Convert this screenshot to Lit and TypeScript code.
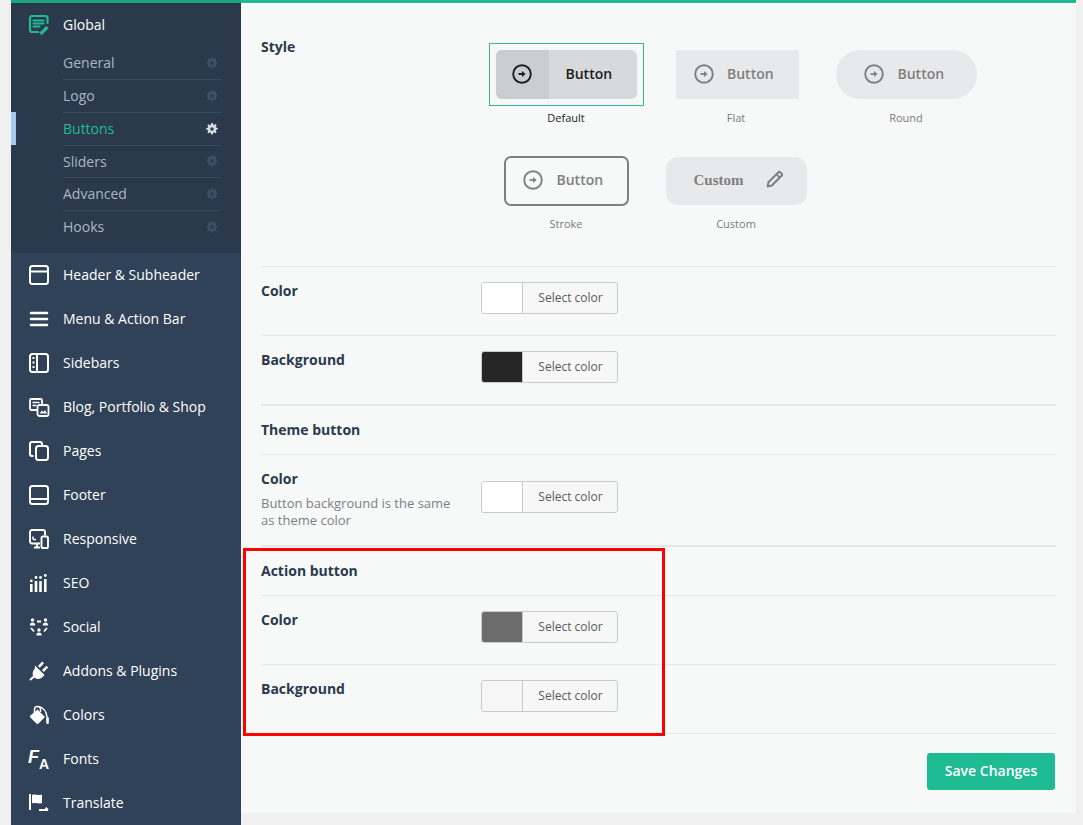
import { LitElement, html, css, svg } from "lit";
import { customElement } from "lit/decorators.js";

const icons: Record<string, unknown> = {
  global: svg`<g fill="none" stroke="#1fbc94" stroke-width="2.200" stroke-linecap="round"><path d="M18.500 8V3a2 2 0 0 0-2-2H3a2 2 0 0 0-2 2v12a2 2 0 0 0 2 2h6"/><path d="M4.500 5.500h10M4.500 8.500h10M4.500 11.500h6"/><path d="M11.500 19l7-7" stroke-width="3.400" stroke-linecap="butt"/></g>`,
  header: svg`<rect x="1" y="1" width="18" height="18" rx="2.500"/><path d="M1 6.500h18"/>`,
  menu: svg`<path d="M2 4h16M2 10h16M2 16h16" stroke-width="2.600" stroke-linecap="round"/>`,
  sidebars: svg`<rect x="1" y="1" width="18" height="18" rx="2.500"/><path d="M8 1v18"/><path d="M3.500 5h2M3.500 9.500h2M3.500 14h2" stroke-width="1.800"/>`,
  blog: svg`<path d="M8 13H2.500A1.500 1.500 0 0 1 1 11.500v-8A1.500 1.500 0 0 1 2.500 2h9A1.500 1.500 0 0 1 13 3.500V7" stroke-width="1.800"/><path d="M3.500 5.500h7M3.500 8.500h4" stroke-width="1.600"/><rect x="8.500" y="8" width="11" height="11" rx="2" stroke-width="1.800"/><path d="M10.500 16.500l2.500-3 1.500 1.500 1.500-2 2 3.500z" fill="#fff" stroke="none"/>`,
  pages: svg`<path d="M4.500 15H3a2 2 0 0 1-2-2V3a2 2 0 0 1 2-2h8a2 2 0 0 1 2 2v1"/><rect x="7" y="5" width="12" height="14" rx="2.500"/>`,
  footer: svg`<rect x="1" y="1" width="18" height="18" rx="2.500"/><path d="M1 14h18"/>`,
  responsive: svg`<path d="M11 14.500H3a2 2 0 0 1-2-2V3a2 2 0 0 1 2-2h11a2 2 0 0 1 2 2v3.500" stroke-width="1.900"/><path d="M4 10.500v-3M4 10.500h3" stroke-width="1.500"/><rect x="12.500" y="7.500" width="6.500" height="11.500" rx="1.600" stroke-width="1.900"/><path d="M5 18.500h6M8 14.500v4" stroke-width="1.900"/>`,
  seo: svg`<g fill="#fff" stroke="none"><rect x="1" y="11" width="2.600" height="8" rx=".6"/><rect x="5.700" y="8" width="2.600" height="11" rx=".6"/><rect x="10.200" y="8" width="2.600" height="11" rx=".6"/><rect x="15" y="6" width="2.600" height="13" rx=".6"/><circle cx="2.300" cy="7.800" r="1.400"/><circle cx="7" cy="4.500" r="1.400"/><circle cx="11.500" cy="4.500" r="1.400"/><circle cx="16.300" cy="2.500" r="1.400"/></g>`,
  social: svg`<g fill="#fff" stroke="none"><circle cx="3.500" cy="3" r="1.700"/><path d="M.800 8.500c0-2 1-3 2.700-3s2.700 1 2.700 3z"/><circle cx="16.500" cy="3" r="1.700"/><path d="M13.800 8.500c0-2 1-3 2.700-3s2.700 1 2.700 3z"/><circle cx="10" cy="13" r="1.700"/><path d="M7.300 18.500c0-2 1-3 2.700-3s2.700 1 2.700 3z"/></g><path d="M8 4.500h4M2 11l3 3.500M18 11l-3 3.500" stroke-width="1.800"/>`,
  addons: svg`<g fill="#fff" stroke="none"><path d="M6 4.500l9.500 9.500-2.200 2.200c-2.500 2.300-6 2.300-8 .4-2.200-2.200-2.200-6 .5-8.900z"/><path d="M9 5L13.200.5 15 2.200 10.800 6.800zM13 9l4.500-4.200 1.700 1.800L14.800 11z"/></g><path d="M6 14.500L1 19" stroke-width="2.200"/>`,
  colors: svg`<g stroke="none" fill="#fff"><path d="M8.500 4.500L16 12l-6.500 6.500a1.500 1.500 0 0 1-2.100 0l-6-6a1.500 1.500 0 0 1 0-2.100z"/><rect x="17.200" y="12" width="2.600" height="7" rx="1.200"/></g><path d="M5.500 8V4.500a3 3 0 0 1 6 0V7M10 1.500c4 1 7.500 5 8 10.500" stroke-width="1.500"/>`,
  fonts: svg`<text x="-1" y="14" font-family="'Liberation Sans',sans-serif" font-size="18" font-weight="700" font-style="italic" fill="#fff" stroke="none">F</text><text x="10" y="20" font-family="'Liberation Sans',sans-serif" font-size="14" font-weight="700" fill="#fff" stroke="none">A</text>`,
  translate: svg`<path d="M1 1v16" stroke-width="2"/><path d="M3 2c3-1.500 5.500 1 10-.5V10c-3 1.500-6-.8-10 .5z" fill="#fff" stroke="none"/><path d="M10 17h9M16.500 14.800l2.500 2.200" stroke-width="1.800"/>`,
};

const gear = svg`<path fill="currentColor" fill-rule="evenodd" d="M7.900 0h2.200l.4 2.100 1.300.5 1.800-1.200 1.600 1.600-1.200 1.800.5 1.300 2.100.4v2.200l-2.100.4-.5 1.300 1.200 1.800-1.600 1.600-1.800-1.200-1.300.5-.4 2.100H7.900l-.4-2.100-1.300-.5-1.800 1.200-1.600-1.600 1.200-1.800-.5-1.300L1.400 9V6.800l2.100-.4.5-1.300-1.200-1.800 1.600-1.600 1.800 1.200 1.300-.5zM9 5.600a2.300 2.300 0 1 0 0 4.600 2.300 2.300 0 0 0 0-4.600z"/>`;

const arrowIcon = html`<svg class="arrow" viewBox="0 0 20 20" fill="none" stroke="currentColor">
  <circle cx="10" cy="10" r="8.800" stroke-width="1.900"/>
  <path d="M6.500 10h4" stroke-width="1.800"/>
  <path d="M10 7l3.600 3-3.600 3z" fill="currentColor" stroke="none"/>
</svg>`;

const subItems = ["General", "Logo", "Buttons", "Sliders", "Advanced", "Hooks"];
const navItems: [string, string][] = [
  ["header", "Header & Subheader"],
  ["menu", "Menu & Action Bar"],
  ["sidebars", "Sidebars"],
  ["blog", "Blog, Portfolio & Shop"],
  ["pages", "Pages"],
  ["footer", "Footer"],
  ["responsive", "Responsive"],
  ["seo", "SEO"],
  ["social", "Social"],
  ["addons", "Addons & Plugins"],
  ["colors", "Colors"],
  ["fonts", "Fonts"],
  ["translate", "Translate"],
];

@customElement("app-root")
export class AppRoot extends LitElement {
  static styles = css`
    :host { display: block; height: 825px; overflow: hidden; background: #f0f0f1; font-family: "Open Sans", sans-serif; }
    * { box-sizing: border-box; }
    .page { display: flex; align-items: flex-start; padding-left: 11px; height: 825px; }

    .sidebar { width: 230px; height: 825px; background: #2f4257; flex: none; }
    .global { height: 253px; background: #2a3a4c; border-top: 3px solid #1ca47f; }
    .global-head { display: flex; align-items: center; height: 44px; padding: 0 0 1px 18px; color: #fff; font-size: 14px; }
    .nav-icon { width: 20px; height: 20px; margin-right: 14px; flex: none; fill: none; stroke: #fff; stroke-width: 2; overflow: visible; }
    .sub { margin: 0.15px 0 0 52px; width: 158px; }
    .sub-item { display: flex; align-items: center; justify-content: space-between; height: 32.8px; padding: 0 3px 0 0; border-bottom: 1px solid #3c4b5c; color: #a9b6c5; font-size: 14px; }
    .sub-item span:not(.marker) { margin-bottom: 0.7px; }
    .sub-item:last-child { border-bottom-color: transparent; }
    .sub-item.active { color: #1fbc94; }
    .marker { position: absolute; left: 11px; width: 5px; height: 33px; background: #a9c9ee; }
    .gear { width: 12px; height: 12px; color: #3d4f65; }
    .active .gear { color: #d8dde2; }
    .nav-item { display: flex; align-items: center; height: 44px; padding-left: 18px; color: #fff; font-size: 14px; }
    .nav-item span { margin-bottom: 2px; }

    .main { position: relative; width: 835px; height: 813px; flex: none; background: #f7f9f9; border-top: 3px solid #1fbc94; padding: 0 20px; }
    .row { display: flex; align-items: flex-start; padding: 15px 0 20px; border-bottom: 1px solid #e7e8e8; }
    .row.tall { height: 69px; }
    .row.style { height: 264px; padding-top: 34px; }
    .row.theme { height: 92px; border-bottom: 2px solid #e4e5e5; }
    .row.theme .picker { margin-top: 11px; }
    .row.end-group { border-bottom: 2px solid #e4e5e5; height: 70px; }
    .label-col { width: 220px; flex: none; }
    .label { font-size: 14px; line-height: 19px; font-weight: 700; color: #2a3a4c; margin-top: -1px; }
    .row.style .label { margin-top: 0; }
    .desc { width: 200px; margin-top: 7px; font-size: 13px; line-height: 17px; color: #7a7f84; }
    .heading { height: 49px; display: flex; align-items: center; padding-bottom: 2px; border-bottom: 1px solid #e7e8e8; font-size: 14px; font-weight: 700; color: #2a3a4c; }

    .tiles { display: grid; grid-template-columns: repeat(3, 170px); row-gap: 23px; margin-top: 6px; }
    .tile { display: flex; flex-direction: column; align-items: center; height: 83px; }
    .frame { height: 63px; display: flex; align-items: center; padding: 6px; border: 1px solid transparent; }
    .tile.selected .frame { border-color: #3ab795; }
    .cap { margin-top: 4px; font-size: 11px; line-height: 16px; color: #7a7a7a; }
    .tile.selected .cap { color: #1d1d1d; }
    .btn { display: flex; align-items: center; height: 49px; padding-bottom: 2px; background: #e8e9ea; color: #808080; font-size: 14px; font-weight: 600; }
    .arrow { width: 20px; height: 20px; flex: none; }
    .btn.default { width: 141px; border-radius: 6px; background: #d8d9db; color: #1d1d1d; overflow: hidden; }
    .btn.default .left { width: 53px; height: 49px; align-self: flex-start; padding-bottom: 2px; background: #cbcccd; display: flex; align-items: center; justify-content: center; margin-right: 17px; }
    .btn.flat { width: 123px; margin-left: 3px; padding-left: 18px; gap: 13px; }
    .btn.round { width: 141px; padding-left: 28px; gap: 14px; border-radius: 25px; }
    .btn.stroke { width: 125px; height: 50px; padding-left: 17px; gap: 14px; background: transparent; border: 2px solid #808080; border-radius: 7px; }
    .btn.custom { width: 141px; height: 48px; padding: 0 0 0 28px; gap: 22px; border-radius: 12px; font-family: "Liberation Serif", serif; font-size: 15px; font-weight: 700; }
    .pencil { width: 18px; height: 18px; margin-bottom: 4px; fill: none; stroke: currentColor; stroke-width: 1.900; stroke-linejoin: round; }

    .picker { display: flex; width: 137px; height: 32px; border: 1px solid #c9caca; border-radius: 3px; overflow: hidden; background: #f7f7f7; }
    .swatch { width: 41px; flex: none; border-right: 1px solid #c9caca; }
    .swatch.white { background: #fff; }
    .swatch.dark { background: #262626; }
    .swatch.grey { background: #6c6c6c; }
    .swatch.light { background: #f6f6f6; }
    .select { flex: 1; display: flex; align-items: center; justify-content: center; font-size: 12px; color: #555c61; padding: 0 0 1px 1px; }

    .action { position: relative; }
    .callout { position: absolute; left: -18px; top: 1px; width: 422px; height: 188px; border: 3px solid #ff0000; pointer-events: none; }
    .footer { display: flex; justify-content: flex-end; padding: 19px 1px 0 0; }
    .save { width: 128px; height: 37px; padding-bottom: 2px; display: flex; align-items: center; justify-content: center; background: #1fbc94; border-radius: 3px; color: #fff; font-size: 14px; font-weight: 600; }
  `;

  private picker(tone: string) {
    return html`<div class="picker"><div class="swatch ${tone}"></div><div class="select">Select color</div></div>`;
  }

  private field(label: string, tone: string, extra = "tall") {
    return html`<div class="row ${extra}">
      <div class="label-col"><div class="label">${label}</div></div>
      ${this.picker(tone)}
    </div>`;
  }

  render() {
    return html`<div class="page">
      <aside class="sidebar">
        <div class="global">
          <div class="global-head"><svg class="nav-icon" viewBox="0 0 20 20">${icons.global}</svg>Global</div>
          <div class="sub">
            ${subItems.map((s) => html`<div class="sub-item ${s === "Buttons" ? "active" : ""}">
              ${s === "Buttons" ? html`<span class="marker"></span>` : ""}
              <span>${s}</span>
              <svg class="gear" viewBox="1 0 16 16">${gear}</svg>
            </div>`)}
          </div>
        </div>
        ${navItems.map(([k, t]) => html`<div class="nav-item"><svg class="nav-icon" viewBox="0 0 20 20">${icons[k]}</svg><span>${t}</span></div>`)}
      </aside>
      <main class="main">
        <div class="row style">
          <div class="label-col"><div class="label">Style</div></div>
          <div class="tiles">
            <div class="tile selected"><div class="frame"><div class="btn default"><span class="left">${arrowIcon}</span>Button</div></div><div class="cap">Default</div></div>
            <div class="tile"><div class="frame"><div class="btn flat">${arrowIcon}Button</div></div><div class="cap">Flat</div></div>
            <div class="tile"><div class="frame"><div class="btn round">${arrowIcon}Button</div></div><div class="cap">Round</div></div>
            <div class="tile"><div class="frame"><div class="btn stroke">${arrowIcon}Button</div></div><div class="cap">Stroke</div></div>
            <div class="tile"><div class="frame"><div class="btn custom">Custom
              <svg class="pencil" viewBox="0 0 17 17"><path d="M1.500 15.500l.8-4L11.500 2.300a1.500 1.500 0 0 1 2.100 0l1.100 1.100a1.500 1.500 0 0 1 0 2.100L5.500 14.700z"/><path d="M9.800 4l3.200 3.200"/></svg>
            </div></div><div class="cap">Custom</div></div>
          </div>
        </div>
        ${this.field("Color", "white")}
        ${this.field("Background", "dark", "end-group")}
        <div class="heading">Theme button</div>
        <div class="row theme">
          <div class="label-col">
            <div class="label">Color</div>
            <div class="desc">Button background is the same as theme color</div>
          </div>
          ${this.picker("white")}
        </div>
        <div class="action">
          <div class="heading">Action button</div>
          ${this.field("Color", "grey")}
          ${this.field("Background", "light")}
          <div class="callout"></div>
        </div>
        <div class="footer"><div class="save">Save Changes</div></div>
      </main>
    </div>`;
  }
}
